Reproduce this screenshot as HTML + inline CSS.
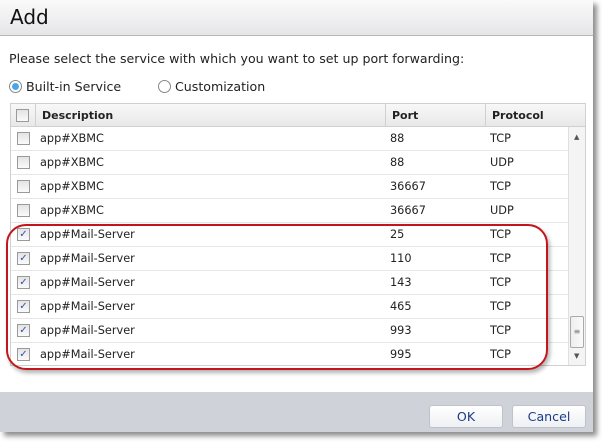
<!DOCTYPE html><html><head><style>
body{margin:0;width:608px;height:448px;background:#fff;font-family:"DejaVu Sans",sans-serif;position:relative;overflow:hidden}
#dlg{position:absolute;left:0;top:0;width:593px;height:432px;background:#fff;box-shadow:4px 4px 5px rgba(0,0,0,.45)}
#title{height:35px;background:linear-gradient(#fafafa,#e6e6e8);border-bottom:1px solid #b8b8b8;font-size:20px;color:#111;line-height:35px;padding-left:10px}
.t{position:absolute;font-size:12.6px;color:#222}
#tbl{position:absolute;left:10px;top:103px;width:576px;height:263px;border:1px solid #d0d0d0;box-sizing:border-box;overflow:hidden}
.hd{position:absolute;top:0;height:23px;background:linear-gradient(#f8f8f8,#e8e8e8);border-bottom:1px solid #d0d0d0;border-right:1px solid #d0d0d0;box-sizing:border-box;font-weight:bold;font-size:11px;line-height:23px;padding-left:6px;color:#222}
.row{position:absolute;left:0;width:557px;height:24px;border-bottom:1px solid #e6e6e6;box-sizing:border-box;font-size:11.3px;line-height:23px;color:#222}
.row span{position:absolute}
.cb{position:absolute;left:6px;top:5px;width:11px;height:11px;border:1px solid #9a9a9a;background:linear-gradient(#e4e4e4,#fafafa)}
.ck{font-size:10px;color:#3a4fa8;line-height:11px;text-align:center;font-weight:bold}
.btn{position:absolute;top:405px;height:23px;border:1px solid #bfc3c9;border-radius:3px;background:linear-gradient(#fff,#eef0f3);font-size:12.6px;color:#1b3a8a;text-align:center;line-height:22px;box-sizing:border-box}
</style></head><body>
<div id="dlg">
<div id="title">Add</div>
<div class="t" style="left:9px;top:51px">Please select the service with which you want to set up port forwarding:</div>
<div style="position:absolute;left:9px;top:80px;width:11px;height:11px;border:1px solid #888;border-radius:50%;background:#fff"><div style="margin:2px;width:7px;height:7px;border-radius:50%;background:#4aa6e8"></div></div>
<div class="t" style="left:26px;top:79px">Built-in Service</div>
<div style="position:absolute;left:158px;top:80px;width:11px;height:11px;border:1px solid #888;border-radius:50%;background:#fff"></div>
<div class="t" style="left:175px;top:79px">Customization</div>
<div id="tbl">
<div class="hd" style="left:0;width:25px"><div class="cb" style="top:5px;left:5px"></div></div>
<div class="hd" style="left:25px;width:350px">Description</div>
<div class="hd" style="left:375px;width:100px">Port</div>
<div class="hd" style="left:475px;width:101px;border-right:0">Protocol</div>
<div style="position:absolute;left:557px;top:23px;width:18px;height:240px;background:#f4f4f4;border-left:1px solid #e0e0e0"></div>
<div style="position:absolute;left:563px;top:29px;font-size:7px;color:#555">▲</div>
<div style="position:absolute;left:563px;top:248px;font-size:7px;color:#555">▼</div>
<div style="position:absolute;left:559px;top:212px;width:12px;height:30px;border:1px solid #aaa;border-radius:2px;background:linear-gradient(90deg,#eee,#fafafa);font-size:8px;color:#777;text-align:center;line-height:30px">≡</div>
<div class="row" style="top:23px"><div class="cb"></div><span style="left:29px">app#XBMC</span><span style="left:379px">88</span><span style="left:479px">TCP</span></div>
<div class="row" style="top:47px"><div class="cb"></div><span style="left:29px">app#XBMC</span><span style="left:379px">88</span><span style="left:479px">UDP</span></div>
<div class="row" style="top:71px"><div class="cb"></div><span style="left:29px">app#XBMC</span><span style="left:379px">36667</span><span style="left:479px">TCP</span></div>
<div class="row" style="top:95px"><div class="cb"></div><span style="left:29px">app#XBMC</span><span style="left:379px">36667</span><span style="left:479px">UDP</span></div>
<div class="row" style="top:119px"><div class="cb ck">✓</div><span style="left:29px">app#Mail-Server</span><span style="left:379px">25</span><span style="left:479px">TCP</span></div>
<div class="row" style="top:143px"><div class="cb ck">✓</div><span style="left:29px">app#Mail-Server</span><span style="left:379px">110</span><span style="left:479px">TCP</span></div>
<div class="row" style="top:167px"><div class="cb ck">✓</div><span style="left:29px">app#Mail-Server</span><span style="left:379px">143</span><span style="left:479px">TCP</span></div>
<div class="row" style="top:191px"><div class="cb ck">✓</div><span style="left:29px">app#Mail-Server</span><span style="left:379px">465</span><span style="left:479px">TCP</span></div>
<div class="row" style="top:215px"><div class="cb ck">✓</div><span style="left:29px">app#Mail-Server</span><span style="left:379px">993</span><span style="left:479px">TCP</span></div>
<div class="row" style="top:239px"><div class="cb ck">✓</div><span style="left:29px">app#Mail-Server</span><span style="left:379px">995</span><span style="left:479px">TCP</span></div>
</div>
<div style="position:absolute;left:6px;top:224px;width:538px;height:142px;border:2px solid #c0161c;border-radius:20px;box-shadow:2px 3px 4px rgba(0,0,0,.3)"></div>
<div style="position:absolute;left:0;top:392px;width:593px;height:40px;background:#cfd2d9"></div>
<div class="btn" style="left:429px;width:74px">OK</div>
<div class="btn" style="left:512px;width:74px">Cancel</div>
</div>
</body></html>
